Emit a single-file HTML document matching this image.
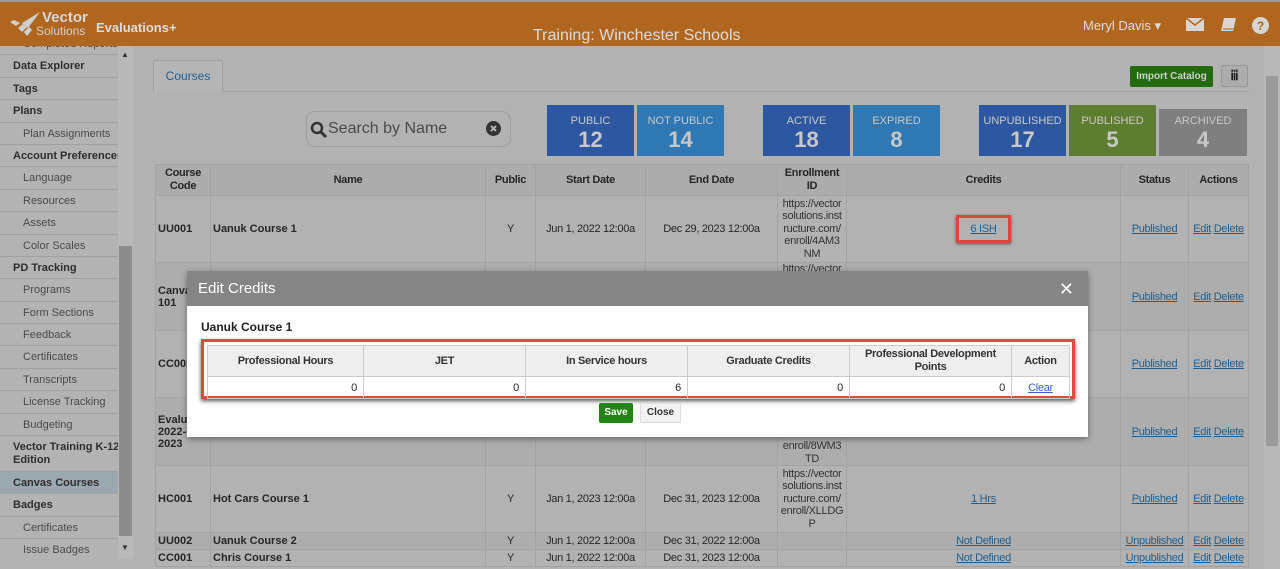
<!DOCTYPE html>
<html><head><meta charset="utf-8"><style>
*{box-sizing:border-box;margin:0;padding:0}
html,body{width:1280px;height:569px;overflow:hidden}
body{background:#b2b2b2;font-family:"Liberation Sans",sans-serif;position:relative;font-size:11px;color:#222}
.hdr{position:absolute;left:0;top:0;width:1280px;height:46px;background:#b0661f;border-top:2px solid #9a9a9a}
.abs{position:absolute}
.side{position:absolute;left:0;top:46px;width:118px;height:513px;background:#b3b3b3;overflow:hidden}
.side div{height:22.4px;line-height:22px;border-bottom:1px solid #a0a0a0;padding-left:13px;font-weight:bold;color:#2e2e2e;white-space:nowrap;font-size:11px}
.side div.s{padding-left:23px;font-weight:normal;color:#4a4a4a}
.sb{position:absolute;left:118px;top:46px;width:15px;height:513px;background:#b8b8b8}
table{border-collapse:collapse;table-layout:fixed;position:absolute;left:155px;top:164px;width:1093px}
td,th{border:1px solid #a3a3a3;font-size:11px;padding:0 2px;vertical-align:middle;text-align:center;color:#262626;letter-spacing:-0.3px;white-space:nowrap;overflow:hidden}
th{background:#acacac;font-weight:bold;height:31px;line-height:13px}
td.l{text-align:left;font-weight:bold;letter-spacing:0}
td.u{line-height:12.5px;color:#333}
tr.a td{background:#adadad}
.lk{color:#1f5f8f;text-decoration:underline}
.box{position:absolute;top:105px;height:51px;color:#c8c8c8;text-align:center;border-top:4px solid}
.box b{display:block;font-size:11px;font-weight:normal;margin-top:6px}
.box i{display:block;font-style:normal;font-size:22px;font-weight:bold;line-height:26px}
.modal{position:absolute;left:187px;top:271px;width:901px;height:166px;background:#fff;box-shadow:0 2px 6px rgba(0,0,0,.4)}
.mh{height:35px;background:#858585;color:#fff;font-size:15px;line-height:36px;padding-left:11px}
.ct th,.ct td{border:1px solid #ccc}
</style></head><body>
<div class="hdr">
 <svg class="abs" style="left:8px;top:8px" width="40" height="30" viewBox="0 0 40 30"><g fill="#cfcfcf"><path d="M2 12l6 4 4-3-6-3z"/><path d="M10 18l5-4 4 3-5 5z"/><path d="M16 22l5-5 3 3-5 6z"/><path d="M14 13L32 2l-12 16z"/></g></svg>
 <div class="abs" style="left:42px;top:9px;color:#d6d6d6;font-weight:bold;font-size:15px;line-height:14px">Vector</div>
 <div class="abs" style="left:36px;top:23px;color:#cfcfcf;font-size:12px;line-height:12px">Solutions</div>
 <div class="abs" style="left:96px;top:18px;color:#dcdcdc;font-weight:bold;font-size:13px">Evaluations+</div>
 <div class="abs" style="left:533px;top:25px;color:#dcdcdc;font-size:16px">Training: Winchester Schools</div>
 <div class="abs" style="left:1083px;top:16px;color:#dcdcdc;font-size:13px">Meryl Davis ▾</div>
 <svg class="abs" style="left:1186px;top:16px" width="18" height="14"><rect width="18" height="13" fill="#d6d6d6"/><path d="M0 0l9 7 9-7" stroke="#b0661f" stroke-width="1.5" fill="none"/></svg>
 <svg class="abs" style="left:1219px;top:15px" width="18" height="16"><path d="M5 1h12l-3 13H2z" fill="#d6d6d6"/><path d="M4 12h10" stroke="#b0661f"/></svg>
 <svg class="abs" style="left:1252px;top:15px" width="17" height="17"><circle cx="8.5" cy="8.5" r="8.5" fill="#d6d6d6"/><text x="8.5" y="13" font-size="12" font-weight="bold" text-anchor="middle" fill="#b0661f" font-family="Liberation Sans">?</text></svg>
</div>
<div class="side">
 <div class="s" style="margin-top:-13px">Completed Reports</div>
 <div>Data Explorer</div><div>Tags</div><div>Plans</div><div class="s">Plan Assignments</div><div>Account Preferences</div><div class="s">Language</div><div class="s">Resources</div><div class="s">Assets</div><div class="s">Color Scales</div><div>PD Tracking</div><div class="s">Programs</div><div class="s">Form Sections</div><div class="s">Feedback</div><div class="s">Certificates</div><div class="s">Transcripts</div><div class="s">License Tracking</div><div class="s">Budgeting</div><div style="height:36px;line-height:13px;padding-top:5px">Vector Training K-12<br>Edition</div><div style="background:#9aa8b0">Canvas Courses</div><div>Badges</div><div class="s">Certificates</div><div class="s">Issue Badges</div>
</div>
<div class="sb"><div class="abs" style="left:1px;top:200px;width:13px;height:290px;background:#8c8c8c"></div><div class="abs" style="left:3px;top:4px;font-size:8px;color:#333">▲</div><div class="abs" style="left:3px;top:497px;font-size:8px;color:#333">▼</div></div>
<div class="abs" style="left:1264px;top:46px;width:16px;height:523px;background:#b8b8b8"><div class="abs" style="left:2px;top:30px;width:12px;height:370px;background:#9a9a9a"></div></div>
<div class="abs" style="left:153px;top:60px;width:70px;height:32px;border:1px solid #a0a0a0;border-bottom:none;background:#b5b5b5;color:#1f5f8f;font-size:12px;line-height:31px;text-align:center">Courses</div>
<div class="abs" style="left:222px;top:91px;width:1027px;height:1px;background:#a0a0a0"></div>
<div class="abs" style="left:1130px;top:66px;width:83px;height:21px;background:#236b0c;border-radius:2px;color:#cfcfcf;font-weight:bold;font-size:10px;line-height:21px;text-align:center">Import Catalog</div>
<div class="abs" style="left:1221px;top:65px;width:27px;height:22px;border:1px solid #999;background:#acacac;border-radius:2px;text-align:center;font-weight:bold;font-size:13px;line-height:20px;color:#222">ⅲ</div>
<div class="abs" style="left:306px;top:111px;width:205px;height:36px;border:1px solid #a0a0a0;border-radius:9px"></div>
<svg class="abs" style="left:310px;top:121px" width="18" height="18"><circle cx="7" cy="7" r="5" stroke="#333" stroke-width="2.5" fill="none"/><path d="M10.5 10.5L16 16" stroke="#333" stroke-width="3"/></svg>
<div class="abs" style="left:328px;top:120px;font-size:16px;color:#4a4a4a">Search by Name</div>
<svg class="abs" style="left:486px;top:121px" width="15" height="15"><circle cx="7.5" cy="7.5" r="7.5" fill="#333"/><path d="M5 5l5 5M10 5l-5 5" stroke="#b2b2b2" stroke-width="2"/></svg>
<div class="box" style="left:547px;width:87px;background:#2d57a0;border-color:#2d57a0"><b>PUBLIC</b><i>12</i></div>
<div class="box" style="left:637px;width:87px;background:#2f78b4;border-color:#2f78b4"><b>NOT PUBLIC</b><i>14</i></div>
<div class="box" style="left:763px;width:87px;background:#2d57a0;border-color:#2d57a0"><b>ACTIVE</b><i>18</i></div>
<div class="box" style="left:853px;width:87px;background:#2f78b4;border-color:#2f78b4"><b>EXPIRED</b><i>8</i></div>
<div class="box" style="left:979px;width:87px;background:#2d57a0;border-color:#2d57a0"><b>UNPUBLISHED</b><i>17</i></div>
<div class="box" style="left:1069px;width:87px;background:#5f7d31;border-color:#5f7d31"><b>PUBLISHED</b><i>5</i></div>
<div class="box" style="left:1159px;width:88px;background:#7f7f7f;border-color:#b2b2b2"><b>ARCHIVED</b><i>4</i></div>
<table>
<colgroup><col style="width:55px"><col style="width:275px"><col style="width:50px"><col style="width:110px"><col style="width:132px"><col style="width:69px"><col style="width:274px"><col style="width:68px"><col style="width:60px"></colgroup>
<tr><th>Course<br>Code</th><th>Name</th><th>Public</th><th>Start Date</th><th>End Date</th><th>Enrollment<br>ID</th><th>Credits</th><th>Status</th><th>Actions</th></tr>
<tr style="height:67px"><td class="l">UU001</td><td class="l">Uanuk Course 1</td><td>Y</td><td>Jun 1, 2022 12:00a</td><td>Dec 29, 2023 12:00a</td><td class="u">https://vector<br>solutions.inst<br>ructure.com/<br>enroll/4AM3<br>NM</td><td style="overflow:visible"><span style="display:inline-block;border:3px solid #d5483b;padding:5px 11px;box-shadow:0 1px 3px #555" class="lk">6 ISH</span></td><td class="lk">Published</td><td><span class="lk">Edit</span> <span class="lk">Delete</span></td></tr>
<tr class="a" style="height:68px"><td class="l">Canvas<br>101</td><td></td><td></td><td></td><td></td><td class="u" style="vertical-align:top">https://vector</td><td></td><td class="lk">Published</td><td><span class="lk">Edit</span> <span class="lk">Delete</span></td></tr>
<tr style="height:67px"><td class="l">CC002</td><td></td><td></td><td></td><td></td><td></td><td></td><td class="lk">Published</td><td><span class="lk">Edit</span> <span class="lk">Delete</span></td></tr>
<tr class="a" style="height:68px"><td class="l">Evaluation<br>2022-<br>2023</td><td></td><td></td><td></td><td></td><td class="u" style="vertical-align:bottom">enroll/8WM3<br>TD</td><td></td><td class="lk">Published</td><td><span class="lk">Edit</span> <span class="lk">Delete</span></td></tr>
<tr style="height:67px"><td class="l">HC001</td><td class="l">Hot Cars Course 1</td><td>Y</td><td>Jan 1, 2023 12:00a</td><td>Dec 31, 2023 12:00a</td><td class="u">https://vector<br>solutions.inst<br>ructure.com/<br>enroll/XLLDG<br>P</td><td class="lk">1 Hrs</td><td class="lk">Published</td><td><span class="lk">Edit</span> <span class="lk">Delete</span></td></tr>
<tr class="a" style="height:17px"><td class="l">UU002</td><td class="l">Uanuk Course 2</td><td>Y</td><td>Jun 1, 2022 12:00a</td><td>Dec 31, 2022 12:00a</td><td></td><td class="lk">Not Defined</td><td class="lk">Unpublished</td><td><span class="lk">Edit</span> <span class="lk">Delete</span></td></tr>
<tr style="height:17px"><td class="l">CC001</td><td class="l">Chris Course 1</td><td>Y</td><td>Jun 1, 2022 12:00a</td><td>Dec 31, 2023 12:00a</td><td></td><td class="lk">Not Defined</td><td class="lk">Unpublished</td><td><span class="lk">Edit</span> <span class="lk">Delete</span></td></tr>
</table>
<div class="modal">
 <div class="mh">Edit Credits<span style="position:absolute;right:14px;top:0;font-size:18px">✕</span></div>
 <div class="abs" style="left:14px;top:49px;font-weight:bold;font-size:12px;color:#222">Uanuk Course 1</div>
 <div class="abs" style="left:14px;top:68px;width:874px;height:60px;border:3px solid #e04b3b;box-shadow:0 2px 4px #555"></div>
 <table class="ct" style="left:20px;top:74px;width:862px;position:absolute">
 <colgroup><col style="width:156px"><col style="width:162px"><col style="width:162px"><col style="width:162px"><col style="width:162px"><col style="width:58px"></colgroup>
 <tr><th style="background:#eee;height:26px;color:#333">Professional Hours</th><th style="background:#eee;color:#333">JET</th><th style="background:#eee;color:#333">In Service hours</th><th style="background:#eee;color:#333">Graduate Credits</th><th style="background:#eee;color:#333">Professional Development<br>Points</th><th style="background:#eee;color:#333">Action</th></tr>
 <tr style="height:22px"><td style="text-align:right;padding-right:6px">0</td><td style="text-align:right;padding-right:6px">0</td><td style="text-align:right;padding-right:6px">6</td><td style="text-align:right;padding-right:6px">0</td><td style="text-align:right;padding-right:6px">0</td><td><span style="color:#3a5fc0;text-decoration:underline">Clear</span></td></tr>
 </table>
 <div class="abs" style="left:412px;top:132px;width:34px;height:20px;background:#21850f;color:#fff;font-weight:bold;font-size:10px;line-height:20px;text-align:center;border-radius:2px">Save</div>
 <div class="abs" style="left:453px;top:132px;width:41px;height:20px;background:#f2f2f2;border:1px solid #ddd;color:#333;font-weight:bold;font-size:10px;line-height:18px;text-align:center">Close</div>
</div>
</body></html>
